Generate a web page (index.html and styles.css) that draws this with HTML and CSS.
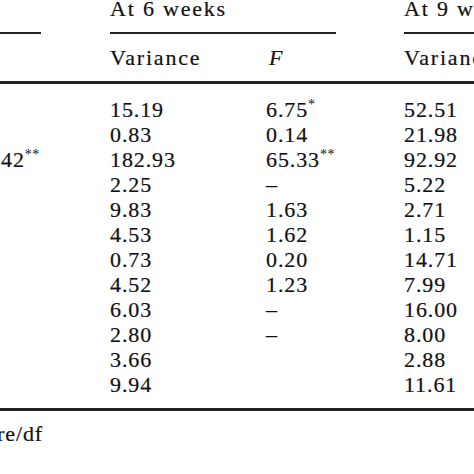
FILE: index.html
```html
<!DOCTYPE html>
<html lang="en">
<head>
<meta charset="utf-8">
<title>Variance table</title>
<link rel="stylesheet" href="styles.css">
</head>
<body>
<div class="sheet">
  <div class="row head-top">
    <div class="cell c1 ruled"></div>
    <div class="cell c34 ruled">At 6 weeks</div>
    <div class="cell c6 ruled">At 9 weeks</div>
  </div>
  <div class="row head-sub">
    <div class="cell c3">Variance</div>
    <div class="cell c4 italic">F</div>
    <div class="cell c6">Variance</div>
  </div>
  <div class="body">
    <div class="row"><div class="cell c1"></div><div class="cell c3">15.19</div><div class="cell c4">6.75<sup class="sig">*</sup></div><div class="cell c6">52.51</div></div>
    <div class="row"><div class="cell c1"></div><div class="cell c3">0.83</div><div class="cell c4">0.14</div><div class="cell c6">21.98</div></div>
    <div class="row"><div class="cell c1">42<sup class="sig">**</sup></div><div class="cell c3">182.93</div><div class="cell c4">65.33<sup class="sig">**</sup></div><div class="cell c6">92.92</div></div>
    <div class="row"><div class="cell c1"></div><div class="cell c3">2.25</div><div class="cell c4">–</div><div class="cell c6">5.22</div></div>
    <div class="row"><div class="cell c1"></div><div class="cell c3">9.83</div><div class="cell c4">1.63</div><div class="cell c6">2.71</div></div>
    <div class="row"><div class="cell c1"></div><div class="cell c3">4.53</div><div class="cell c4">1.62</div><div class="cell c6">1.15</div></div>
    <div class="row"><div class="cell c1"></div><div class="cell c3">0.73</div><div class="cell c4">0.20</div><div class="cell c6">14.71</div></div>
    <div class="row"><div class="cell c1"></div><div class="cell c3">4.52</div><div class="cell c4">1.23</div><div class="cell c6">7.99</div></div>
    <div class="row"><div class="cell c1"></div><div class="cell c3">6.03</div><div class="cell c4">–</div><div class="cell c6">16.00</div></div>
    <div class="row"><div class="cell c1"></div><div class="cell c3">2.80</div><div class="cell c4">–</div><div class="cell c6">8.00</div></div>
    <div class="row"><div class="cell c1"></div><div class="cell c3">3.66</div><div class="cell c4"></div><div class="cell c6">2.88</div></div>
    <div class="row"><div class="cell c1"></div><div class="cell c3">9.94</div><div class="cell c4"></div><div class="cell c6">11.61</div></div>
  </div>
  <div class="foot">re/df</div>
</div>
</body>
</html>
```

FILE: styles.css
```css
html, body {
  margin: 0;
  padding: 0;
  background: #ffffff;
  overflow: hidden;
}

body {
  width: 474px;
  height: 474px;
}

.sheet {
  width: 474px;
  overflow: hidden;
  font-family: "Liberation Serif", "Times New Roman", serif;
  font-size: 22px;
  line-height: 25px;
  letter-spacing: 0.9px;
  color: #111111;
  -webkit-text-stroke: 0.2px #111111;
}

.row {
  display: grid;
  grid-template-columns: 41px 69px 156px 70px 68px 70px;
}

.cell {
  white-space: nowrap;
}

.c1 { grid-column: 1; padding-left: 1px; }
.c3 { grid-column: 3; }
.c4 { grid-column: 4; }
.c34 { grid-column: 3 / span 2; }
.c6 { grid-column: 6; }

.head-top,
.head-sub {
  letter-spacing: 1.8px;
}

.head-top .cell {
  line-height: 17px;
  padding-bottom: 15px;
}

.ruled {
  border-bottom: 2px solid #222222;
}

.head-sub {
  padding: 11px 0 11px;
  border-bottom: 3px solid #222222;
}

.italic {
  font-style: italic;
  padding-left: 3px;
}

.body {
  padding: 13px 0 11px;
  border-bottom: 3px solid #222222;
}

.sig {
  font-size: 14px;
  line-height: 0;
  letter-spacing: 0.5px;
  vertical-align: 8px;
  -webkit-text-stroke: 0;
}

.foot {
  padding-top: 10px;
  margin-left: -3px;
}
```
